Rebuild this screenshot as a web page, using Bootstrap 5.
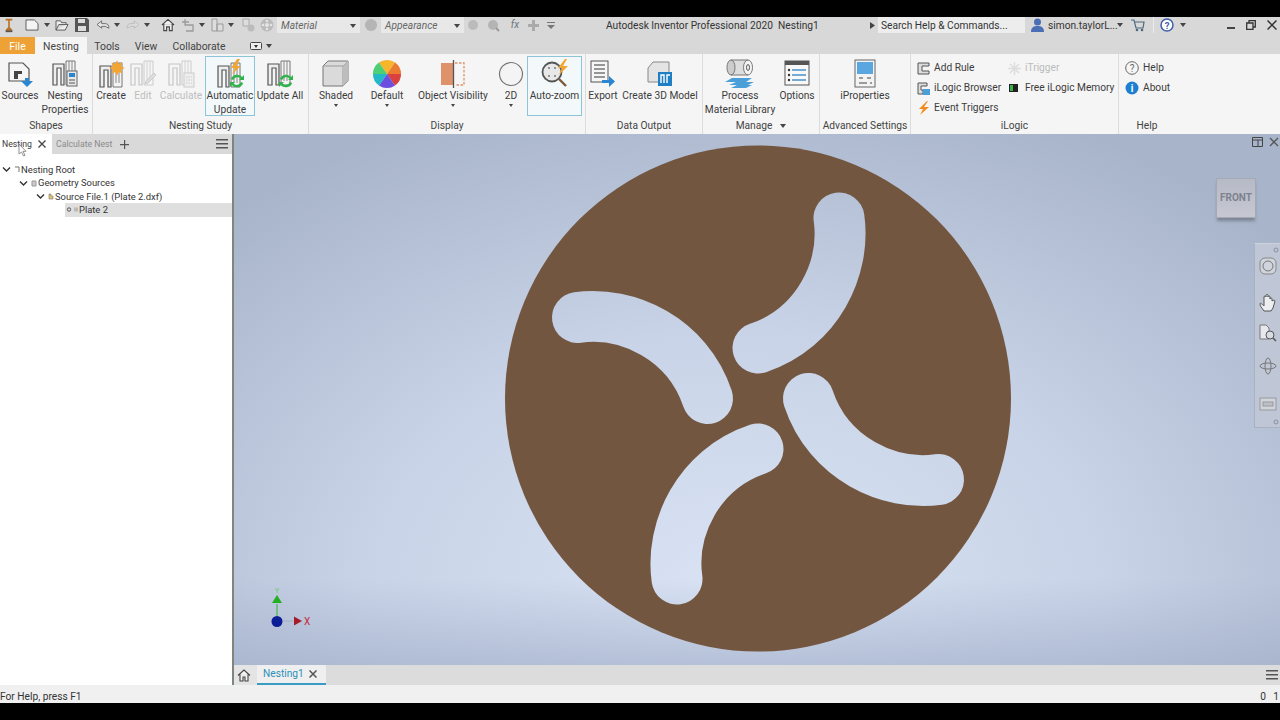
<!DOCTYPE html>
<html lang="en">
<head>
    <meta charset="UTF-8">
    <title>Autodesk Inventor Professional 2020 - Nesting1</title>
    <link href="https://cdn.jsdelivr.net/npm/bootstrap@5.3.0/dist/css/bootstrap.min.css" rel="stylesheet">
    <style>
        html, body { height: 100%; }
        body {
            background: #000;
            overflow: hidden;
            font-family: Roboto, "Liberation Sans", sans-serif;
            font-size: 10.2px;
            line-height: 14px;
            color: #3c3c3c;
            white-space: nowrap;
        }
        svg { display: block; flex: none; }
        .app-shell { margin-top: 17px; height: 686px; width: 1280px; position: relative; }

        /* title bar */
        .qa-bar { height: 20px; background: #d8d8d8; color: #333; padding-bottom: 4px; }
        .qa-ico { width: 14px; justify-content: center; align-items: center; }
        .qa-logo { width: 17px; justify-content: center; }
        .qa-combo { background: #e8e8e8; height: 16px; width: 83px; padding: 1px 0 0 4px; font-style: italic; color: #666; }
        .qa-search { background: #ededed; height: 16px; width: 147px; padding: 1px 0 0 3px; }
        .qa-caret { width: 0; height: 0; border-left: 3px solid transparent; border-right: 3px solid transparent; border-top: 4px solid #444; }
        .g1 { margin-left: 1px; } .g2 { margin-left: 2px; } .g3 { margin-left: 3px; } .g4 { margin-left: 4px; }
        .g5 { margin-left: 5px; } .g6 { margin-left: 6px; } .g7 { margin-left: 7px; } .g8 { margin-left: 8px; }
        .g48 { margin-left: 48px; }
        .qa-title { width: 172px; padding-top: 1px; }
        .qa-doc { width: 92px; padding-top: 1px; }
        .qa-user { width: 69px; margin-left: 4px; padding-top: 1px; }
        .qa-sep { height: 16px; margin-left: 8px; }
        .win-btns { gap: 11px; padding-right: 3px; }

        /* ribbon tabs */
        .tab-row { height: 17px; background: #d8d8d8; font-size: 10.4px; }
        .tab-item { color: #444; padding-top: 2px; }
        .tab-file { width: 35px; justify-content: center; background: #eea236; color: #fff; }
        .tab-on { background: #f5f5f5; width: 52px; justify-content: center; }
        .tab-tools { width: 40px; justify-content: center; }
        .tab-view { width: 38px; justify-content: center; }
        .tab-collab { width: 68px; justify-content: center; margin-right: 17px; }

        /* ribbon */
        .ribbon { height: 80px; background: #f5f5f5; }
        .rb-group { border-right: 1px solid #dcdcdc; height: 80px; padding-top: 2px; }
        .rb-label { text-align: center; line-height: 14px; color: #444; margin-top: 3px; }
        .rb-row { height: 60px; }
        .rb-btn { padding-top: 2px; text-align: center; border: 1px solid transparent; line-height: 14px; color: #3c3c3c; }
        .rb-btn svg { height: 30px; }
        .rb-on { background: #f3f8fb; border-color: #8cc4d8; }
        .rb-off { color: #bdbdbd; }
        .rb-drop { width: 0; height: 0; border-left: 2.500px solid transparent; border-right: 2.500px solid transparent; border-top: 3px solid #444; margin-top: 1px; }
        .g-shapes { width: 93px; } .g-study { width: 216px; } .g-display { width: 277px; }
        .g-data { width: 117px; } .g-manage { width: 117px; } .g-adv { width: 91px; }
        .g-logic { width: 208px; } .g-help { flex: 1; border-right: 0; }
        .help-label { width: 56px; }
        .bw-28 { width: 28px; } .bw-32 { width: 32px; } .bw-34 { width: 34px; } .bw-36 { width: 36px; }
        .bw-40 { width: 40px; } .bw-48 { width: 48px; } .bw-50 { width: 50px; } .bw-54 { width: 54px; }
        .bw-55 { width: 55px; } .bw-74 { width: 74px; } .bw-80 { width: 80px; } .bw-84 { width: 84px; } .bw-90 { width: 90px; }
        .side-col { padding: 2px 0 0 6px; width: 97px; }
        .side-col2 { padding: 2px 0 0 0; }
        .side-row { height: 20px; gap: 4px; }
        .side-off { color: #bbb; }

        /* browser panel */
        .main-row { height: 551px; }
        .browser-pane { width: 234px; background: #fff; border-right: 2px solid #7d8780; }
        .pane-tabs { height: 20px; background: #fff; font-size: 8.7px; }
        .pane-on { width: 52px; padding-left: 2px; }
        .pane-x { margin-left: auto; margin-right: 6px; }
        .pane-rest { width: 180px; background: #d9d9d9; color: #8b8b8b; padding-left: 4px; }
        .tree-box { padding-top: 9px; font-size: 9.4px; line-height: 13.4px; color: #333; }
        .tree-row { height: 13.4px; }
        .lvl-0 { padding-left: 2px; } .lvl-1 { padding-left: 19px; } .lvl-2 { padding-left: 36px; }
        .tree-sel { margin-left: 65px; background: #dfdfdf; padding-left: 1px; }
        .tree-ico { margin: 0 1px 0 3px; }

        /* viewport */
        .view-col { width: 1046px; }
        .view-area {
            height: 531px; position: relative;
            background:
                linear-gradient(180deg, rgba(160,173,200,0) 84%, rgba(160,173,200,.6) 100%),
                radial-gradient(ellipse 740px 520px at 48% 86%, #d9e3f4 0%, #c8d3e7 50%, #a8b4ca 100%);
        }
        .view-area > svg.plate-svg { position: absolute; left: 0; top: 0; }
        .pane-btns { position: absolute; right: 1px; top: 3px; gap: 6px; }
        .view-cube {
            position: absolute; left: 982px; top: 44px; width: 40px; height: 40px;
            background: linear-gradient(#b6bac6, #c6c7d1); border: 1px solid #a5a9b4;
            box-shadow: 0 4px 3px -1px #7c8494;
            color: #7d828e; font-size: 10px; font-weight: 700;
        }
        .nav-strip {
            position: absolute; right: 0; top: 109px; width: 26px; height: 185px;
            background: #bfc6d5; border-left: 1px solid #aab1c0; border-top: 1px solid #cdd2dc; border-bottom: 1px solid #aab1c0;
        }
        .nav-strip svg { position: absolute; left: 4px; }
        .nav-strip svg.n-dot { left: 18px; }
        .n-t { top: 3px; } .n-b { top: 175px; }
        .n-1 { top: 13px; } .n-2 { top: 49px; } .n-3 { top: 80px; } .n-4 { top: 113px; } .n-5 { top: 149px; }
        .doc-tabs { height: 20px; background: #dcdcdc; }
        .doc-home { width: 23px; padding-left: 3px; background: #e4e4e4; height: 20px; }
        .doc-tab { width: 69px; height: 20px; background: #efefef; border-bottom: 2px solid #3a9cc4; color: #2b8fb8; padding-left: 6px; gap: 5px; }
        .doc-menu { margin-left: auto; margin-right: 2px; }
        .status-bar { height: 18px; background: #f0f0f0; color: #333; padding-top: 5px; }
        .status-num { width: 8px; margin-left: 5px; text-align: center; }
        .mouse-arrow { position: absolute; left: 18px; top: 126px; }
    </style>
</head>
<body>
<svg width="0" height="0" class="position-absolute">
    <defs>
        <g id="nest">
            <path d="M2 25V4h11v21h-3V8H6v17z" fill="#eee" stroke="#555" stroke-width="1.2"/>
            <path d="M15 1h9v24h-9z" fill="#f4f4f4" stroke="#777"/>
            <path d="M18 1v20M21 1v20" stroke="#888"/>
        </g>
        <g id="nest-off">
            <path d="M2 25V4h11v21h-3V8H6v17z" fill="#f5f5f5" stroke="#c6c6c6" stroke-width="1.2"/>
            <path d="M15 1h9v24h-9z" fill="#f5f5f5" stroke="#ccc"/>
            <path d="M18 1v20M21 1v20" stroke="#d2d2d2"/>
        </g>
        <g id="green-sync">
            <path d="M3 6.500a5.500 5.500 0 0 1 9.500-1.500" fill="none" stroke="#2fb34a" stroke-width="2.400"/>
            <path d="M13 9.500a5.500 5.500 0 0 1-9.500 1.500" fill="none" stroke="#2fb34a" stroke-width="2.400"/>
            <path d="M15 2v5h-5zM1 14V9h5z" fill="#2fb34a"/>
        </g>
        <path id="chev" d="M1 1.5l3.5 3.5 3.5-3.5" fill="none" stroke="#333" stroke-width="1.4"/>
    </defs>
</svg>

<div class="app-shell d-flex flex-column">
    <!-- title bar -->
    <div class="qa-bar d-flex align-items-center">
        <div class="qa-logo d-flex">
            <svg width="10" height="15" viewBox="0 0 10 18"><path d="M1 1h8v2H6v8l3 3v2H1v-2l3-3V3H1z" fill="#b8722a"/><path d="M1 15h8v2H1z" fill="#555"/></svg>
        </div>
        <div class="qa-ico d-flex g8"><svg width="14" height="12" viewBox="0 0 15 13"><path d="M1 1h9l4 4v7H1z" fill="#f4f4f4" stroke="#555"/></svg></div>
        <div class="qa-ico d-flex g1"><div class="qa-caret"></div></div>
        <div class="qa-ico d-flex g1"><svg width="14" height="12" viewBox="0 0 15 13"><path d="M1 12V2h5l1 2h5v2H4l-3 6h10l3-6H12" fill="#eee" stroke="#555"/></svg></div>
        <div class="qa-ico d-flex g6"><svg width="14" height="14" viewBox="0 0 14 14"><path d="M0 0h12l2 2v12H0z" fill="#555"/><path d="M3 1h7v4H3zM3 8h8v5H3z" fill="#ddd"/></svg></div>
        <div class="qa-ico d-flex g7"><svg width="14" height="10" viewBox="0 0 15 11"><path d="M6 1L1 5l5 4V7h4l4 2c0-3-1-5-4-5H6z" fill="#e8e8e8" stroke="#666"/></svg></div>
        <div class="qa-ico d-flex"><div class="qa-caret"></div></div>
        <div class="qa-ico d-flex g2"><svg width="14" height="10" viewBox="0 0 15 11"><path d="M9 1l5 4-5 4V7H5L1 9c0-3 1-5 4-5h4z" fill="#ddd" stroke="#bbb"/></svg></div>
        <div class="qa-ico d-flex"><div class="qa-caret"></div></div>
        <div class="qa-ico d-flex g7"><svg width="14" height="14" viewBox="0 0 15 14"><path d="M1 7l6.500-6 6.500 6M3 6v7h3V9h3v4h3V6" fill="#eee" stroke="#444" stroke-width="1.200"/></svg></div>
        <div class="qa-ico d-flex g6"><svg width="14" height="14" viewBox="0 0 14 14"><path d="M4 1v6h8v6H5M1 4h7" fill="none" stroke="#9a9a9a" stroke-width="1.300"/></svg></div>
        <div class="qa-ico d-flex"><div class="qa-caret"></div></div>
        <div class="qa-ico d-flex g1"><svg width="13" height="14" viewBox="0 0 13 14"><path d="M1 1h5v12H1zM6 6h6v7H6z" fill="#ddd" stroke="#9a9a9a"/></svg></div>
        <div class="qa-ico d-flex"><div class="qa-caret"></div></div>
        <div class="qa-ico d-flex g3"><svg width="13" height="14" viewBox="0 0 13 14"><path d="M1 1h6v7H1z" fill="#ddd" stroke="#aaa"/><circle cx="9" cy="10" r="3.500" fill="#bbb"/></svg></div>
        <div class="qa-ico d-flex g5"><svg width="14" height="14" viewBox="0 0 14 14"><circle cx="7" cy="7" r="6.500" fill="#bbb"/><circle cx="7" cy="7" r="2" fill="#e4e4e4"/><circle cx="7" cy="3" r="1.300" fill="#e4e4e4"/><circle cx="7" cy="11" r="1.300" fill="#e4e4e4"/><circle cx="3" cy="7" r="1.300" fill="#e4e4e4"/><circle cx="11" cy="7" r="1.300" fill="#e4e4e4"/></svg></div>
        <div class="qa-combo d-flex align-items-center justify-content-between g3">Material<div class="qa-caret me-1"></div></div>
        <div class="qa-ico d-flex g4"><svg width="14" height="14" viewBox="0 0 15 15"><circle cx="7.500" cy="7.500" r="6.500" fill="#b5b5b5"/></svg></div>
        <div class="qa-combo d-flex align-items-center justify-content-between g3">Appearance<div class="qa-caret me-1"></div></div>
        <div class="qa-ico d-flex g2"><svg width="13" height="13" viewBox="0 0 13 13"><circle cx="6" cy="6" r="5" fill="#bbb"/></svg></div>
        <div class="qa-ico d-flex g6"><svg width="13" height="13" viewBox="0 0 13 13"><circle cx="6" cy="6" r="5" fill="#b4b4b4"/><path d="M9 9l3 3" stroke="#999" stroke-width="2"/></svg></div>
        <div class="qa-ico d-flex g8"><span class="fst-italic text-secondary">fx</span></div>
        <div class="qa-ico d-flex g4"><svg width="11" height="11" viewBox="0 0 11 11"><path d="M4 0h3v4h4v3H7v4H4V7H0V4h4z" fill="#aaa"/></svg></div>
        <div class="qa-ico d-flex g4"><svg width="8" height="7" viewBox="0 0 8 7"><path d="M0 0h8v1H0zM0 3h8L4 7z" fill="#777"/></svg></div>
        <div class="qa-title g48">Autodesk Inventor Professional 2020</div>
        <div class="qa-doc">Nesting1</div>
        <svg width="5" height="7" viewBox="0 0 5 7"><path d="M0 0l5 3.500L0 7z" fill="#444"/></svg>
        <div class="qa-search d-flex align-items-center g3">Search Help &amp; Commands...</div>
        <svg class="g6" width="13" height="14" viewBox="0 0 13 14"><circle cx="6.500" cy="4" r="3.500" fill="#4a6fb5"/><path d="M0 14c0-5 3-6 6.500-6S13 9 13 14z" fill="#4a6fb5"/></svg>
        <div class="qa-user">simon.taylorL...</div>
        <div class="qa-caret"></div>
        <svg class="g8" width="14" height="13" viewBox="0 0 14 13"><path d="M0 1h3l2 8h7l1-6H4" fill="none" stroke="#4b6b80" stroke-width="1.200"/><circle cx="6" cy="11" r="1.300" fill="#4b6b80"/><circle cx="11" cy="11" r="1.300" fill="#4b6b80"/></svg>
        <div class="border-start border-secondary-subtle qa-sep"></div>
        <svg class="g6" width="14" height="14" viewBox="0 0 14 14"><circle cx="7" cy="7" r="6" fill="#fff" stroke="#3f5fa8" stroke-width="1.500"/><text x="7" y="10.500" text-anchor="middle" font-size="9.500" font-weight="700" fill="#3f5fa8">?</text></svg>
        <div class="qa-caret g6"></div>
        <div class="ms-auto d-flex align-items-center win-btns">
            <svg width="8" height="8" viewBox="0 0 8 8"><path d="M0 6h8v2H0z" fill="#444"/></svg>
            <svg width="10" height="10" viewBox="0 0 10 10"><path d="M3 3V.700h6.300V7H7M.700 3h6.300v6.300H.700z" fill="none" stroke="#333" stroke-width="1.300"/></svg>
            <svg width="10" height="10" viewBox="0 0 10 10"><path d="M.500.500l9 9M9.500.500l-9 9" stroke="#333" stroke-width="1.500"/></svg>
        </div>
    </div>

    <!-- ribbon tabs -->
    <div class="tab-row d-flex align-items-stretch">
        <div class="tab-item tab-file d-flex align-items-center">File</div>
        <div class="tab-item tab-on d-flex align-items-center">Nesting</div>
        <div class="tab-item tab-tools d-flex align-items-center">Tools</div>
        <div class="tab-item tab-view d-flex align-items-center">View</div>
        <div class="tab-item tab-collab d-flex align-items-center">Collaborate</div>
        <div class="d-flex align-items-center gap-1">
            <svg width="12" height="8" viewBox="0 0 12 8"><rect x=".500" y=".500" width="11" height="7" rx="1" fill="#eee" stroke="#444"/><path d="M4 3h4L6 6z" fill="#333"/></svg>
            <div class="qa-caret"></div>
        </div>
    </div>

    <!-- ribbon -->
    <div class="ribbon d-flex">
        <div class="rb-group g-shapes">
            <div class="rb-row d-flex">
                <div class="rb-btn bw-40 d-flex flex-column align-items-center">
                    <svg width="30" height="30" viewBox="0 0 30 30"><path d="M4 4h14l6 6v12H4z" fill="#f6f6f6" stroke="#555" stroke-width="1.200"/><path d="M9 20v-8h8v3h-4v5z" fill="#444"/><path d="M20 19h4v3h4l-6 6-6-6h4z" fill="#2a86d0"/></svg>
                    Sources
                </div>
                <div class="rb-btn bw-50 d-flex flex-column align-items-center">
                    <svg width="30" height="30" viewBox="0 0 30 30"><use href="#nest" x="1" y="1"/><rect x="17" y="12" width="10" height="15" fill="#e8e8e8" stroke="#666"/><rect x="19" y="14" width="6" height="4" fill="#2a86d0"/><path d="M19 21h6M19 24h6" stroke="#555"/></svg>
                    Nesting<br>Properties
                </div>
            </div>
            <div class="rb-label">Shapes</div>
        </div>
        <div class="rb-group g-study">
            <div class="rb-row d-flex">
                <div class="rb-btn bw-36 d-flex flex-column align-items-center">
                    <svg width="30" height="30" viewBox="0 0 30 30"><use href="#nest" x="2" y="3"/><path d="M21 1l1.600 4 4-1.500L25 7.500l4 1.500-4 1.500 1.600 4-4-1.500-1.600 4-1.600-4-4 1.500 1.600-4-4-1.500 4-1.500-1.600-4 4 1.500z" fill="#f2a531"/></svg>
                    Create
                </div>
                <div class="rb-btn rb-off bw-28 d-flex flex-column align-items-center">
                    <svg width="28" height="30" viewBox="0 0 28 30"><use href="#nest-off" x="0" y="1"/><path d="M25 14l2 2-8 8-3 1 1-3z" fill="#ddd" stroke="#ccc"/></svg>
                    Edit
                </div>
                <div class="rb-btn rb-off bw-48 d-flex flex-column align-items-center">
                    <svg width="30" height="30" viewBox="0 0 30 30"><use href="#nest-off" x="1" y="1"/><rect x="18" y="14" width="10" height="14" fill="#eee" stroke="#ccc"/><path d="M20 18h6M20 21h6M20 24h6" stroke="#ccc" stroke-dasharray="1.500 1"/></svg>
                    Calculate
                </div>
                <div class="rb-btn rb-on bw-50 d-flex flex-column align-items-center">
                    <svg width="30" height="30" viewBox="0 0 30 30"><use href="#nest" x="1" y="3"/><path d="M22 0l-6 9h4l-3 6 9-8h-5l4-7z" fill="#f2a531"/><use href="#green-sync" x="14" y="14"/></svg>
                    Automatic<br>Update
                </div>
                <div class="rb-btn bw-50 d-flex flex-column align-items-center">
                    <svg width="30" height="30" viewBox="0 0 30 30"><use href="#nest" x="1" y="1"/><use href="#green-sync" x="13" y="14"/></svg>
                    Update All
                </div>
            </div>
            <div class="rb-label">Nesting Study</div>
        </div>
        <div class="rb-group g-display">
            <div class="rb-row d-flex">
                <div class="rb-btn bw-54 d-flex flex-column align-items-center">
                    <svg width="30" height="30" viewBox="0 0 30 30"><path d="M2 7l5-5h20v20l-5 5H2z" fill="#dadada" stroke="#777"/><path d="M2 7h20v20M22 7l5-5" fill="none" stroke="#999"/><path d="M22 7l5-5v20l-5 5z" fill="#bdbdbd"/></svg>
                    Shaded
                    <div class="rb-drop"></div>
                </div>
                <div class="rb-btn bw-48 d-flex flex-column align-items-center">
                    <svg width="30" height="30" viewBox="0 0 30 30"><circle cx="15" cy="15" r="14" fill="#ddd"/><path d="M15 15L7 3.500A14 14 0 0 1 23 3.500z" fill="#f6b52b"/><path d="M15 15L23 3.500A14 14 0 0 1 29 15z" fill="#ec7b32"/><path d="M15 15h14a14 14 0 0 1-6 11.500z" fill="#d9403e"/><path d="M15 15l8 11.500a14 14 0 0 1-16 0z" fill="#6d4fe0"/><path d="M15 15L7 26.500A14 14 0 0 1 1 15z" fill="#22b8c7"/><path d="M15 15H1A14 14 0 0 1 7 3.500z" fill="#4fcf75"/></svg>
                    Default
                    <div class="rb-drop"></div>
                </div>
                <div class="rb-btn bw-84 d-flex flex-column align-items-center">
                    <svg width="30" height="30" viewBox="0 0 30 30"><rect x="3" y="4" width="12" height="22" fill="#df9169"/><path d="M15.500 1v28" stroke="#555" stroke-width="1.300"/><path d="M17 4h9v22h-9" fill="none" stroke="#df9169" stroke-dasharray="2.500 1.500" stroke-width="1.300"/></svg>
                    Object Visibility
                    <div class="rb-drop"></div>
                </div>
                <div class="rb-btn bw-32 d-flex flex-column align-items-center">
                    <svg width="26" height="30" viewBox="0 0 26 30"><circle cx="13" cy="15" r="11.500" fill="#f4f4f4" stroke="#777" stroke-width="1.200"/></svg>
                    2D
                    <div class="rb-drop"></div>
                </div>
                <div class="rb-btn rb-on bw-55 d-flex flex-column align-items-center">
                    <svg width="30" height="30" viewBox="0 0 30 30"><circle cx="12" cy="13" r="9.500" fill="#e8e8e8" stroke="#555" stroke-width="1.800"/><path d="M19 20l7 7" stroke="#7c5a3a" stroke-width="2.400"/><path d="M8 9h2M14 9h2M8 17h2M14 17h2" stroke="#777" stroke-width="1.500"/><path d="M25 0l-7 9h4l-3 7 9-9h-5l4-7z" fill="#f2a531"/></svg>
                    Auto-zoom
                </div>
            </div>
            <div class="rb-label">Display</div>
        </div>
        <div class="rb-group g-data">
            <div class="rb-row d-flex">
                <div class="rb-btn bw-34 d-flex flex-column align-items-center">
                    <svg width="30" height="30" viewBox="0 0 30 30"><rect x="3" y="2" width="17" height="21" fill="#f6f6f6" stroke="#555"/><path d="M6 6h11M6 10h11M6 14h11M6 18h11" stroke="#777" stroke-width="1.300"/><path d="M14 21h7v-4l6 5.500-6 5.500v-4h-7z" fill="#2a86d0"/></svg>
                    Export
                </div>
                <div class="rb-btn bw-80 d-flex flex-column align-items-center">
                    <svg width="30" height="30" viewBox="0 0 30 30"><path d="M3 9l5-6h16v20H3z" fill="#e4e4e4" stroke="#888"/><rect x="13" y="13" width="14" height="14" fill="#1f7fc4"/><path d="M16 24v-8h3v8M22 24v-8h3" fill="none" stroke="#fff" stroke-width="1.400"/></svg>
                    Create 3D Model
                </div>
            </div>
            <div class="rb-label">Data Output</div>
        </div>
        <div class="rb-group g-manage">
            <div class="rb-row d-flex">
                <div class="rb-btn bw-74 d-flex flex-column align-items-center">
                    <svg width="30" height="30" viewBox="0 0 30 30"><path d="M6 1h17v15H6z" fill="#ddd"/><ellipse cx="6" cy="8.500" rx="4" ry="7.500" fill="#ccc" stroke="#777"/><ellipse cx="23" cy="8.500" rx="4.500" ry="7.500" fill="#f3f3f3" stroke="#777"/><ellipse cx="23" cy="8.500" rx="1.500" ry="3" fill="none" stroke="#555"/><path d="M6 1h17M6 16h17" stroke="#777"/><path d="M0 23l7-4h20l-6 4zM4 26l7-3h18l-6 3zM6 29l6-3h15l-6 3z" fill="#4b9fd8"/></svg>
                    Process<br>Material Library
                </div>
                <div class="rb-btn bw-40 d-flex flex-column align-items-center">
                    <svg width="28" height="30" viewBox="0 0 28 30"><rect x="2" y="2" width="24" height="24" fill="#f8f8f8" stroke="#555"/><path d="M2 2h24v4H2z" fill="#555"/><path d="M9 11h14M9 16h14M9 21h14" stroke="#4a90c8" stroke-width="1.300"/><circle cx="6" cy="11" r="1.200" fill="#333"/><circle cx="6" cy="16" r="1.200" fill="#333"/><circle cx="6" cy="21" r="1.200" fill="#333"/></svg>
                    Options
                </div>
            </div>
            <div class="rb-label d-flex align-items-center justify-content-center gap-2">Manage <span class="qa-caret"></span></div>
        </div>
        <div class="rb-group g-adv">
            <div class="rb-row d-flex">
                <div class="rb-btn bw-90 d-flex flex-column align-items-center">
                    <svg width="24" height="30" viewBox="0 0 24 30"><rect x="2" y="1" width="20" height="27" fill="#f3f3f3" stroke="#666"/><rect x="4" y="3" width="16" height="12" fill="#5aa6e0"/><path d="M6 19h4M14 19h4M6 24h8M17 24h2" stroke="#444" stroke-width="1.200"/></svg>
                    iProperties
                </div>
            </div>
            <div class="rb-label">Advanced Settings</div>
        </div>
        <div class="rb-group g-logic">
            <div class="rb-row d-flex">
                <div class="side-col">
                    <div class="side-row d-flex align-items-center">
                        <svg width="13" height="13" viewBox="0 0 13 13"><path d="M1 1h11v3H5v5h7v3H1z" fill="#ddd" stroke="#555"/></svg>
                        Add Rule
                    </div>
                    <div class="side-row d-flex align-items-center">
                        <svg width="13" height="13" viewBox="0 0 13 13"><path d="M1 1h9v3H4v4h2v4H1z" fill="#ddd" stroke="#555"/><rect x="6" y="7" width="7" height="6" fill="#4b9fd8"/></svg>
                        iLogic Browser
                    </div>
                    <div class="side-row d-flex align-items-center">
                        <svg width="13" height="14" viewBox="0 0 13 14"><path d="M10 0L2 8h4l-3 6 9-8H7l4-6z" fill="#ef8e1f"/></svg>
                        Event Triggers
                    </div>
                </div>
                <div class="side-col2">
                    <div class="side-row d-flex align-items-center side-off">
                        <svg width="13" height="13" viewBox="0 0 13 13"><path d="M6.500 0v13M0 6.500h13M2 2l9 9M11 2l-9 9" stroke="#ddd" stroke-width="1.500"/></svg>
                        iTrigger
                    </div>
                    <div class="side-row d-flex align-items-center">
                        <svg width="13" height="10" viewBox="0 0 13 10"><rect x="1" y="1" width="9" height="8" fill="#222"/><rect x="2" y="2" width="3" height="6" fill="#36b24a"/></svg>
                        Free iLogic Memory
                    </div>
                </div>
            </div>
            <div class="rb-label">iLogic</div>
        </div>
        <div class="rb-group g-help">
            <div class="rb-row d-flex">
                <div class="side-col">
                    <div class="side-row d-flex align-items-center">
                        <svg width="14" height="14" viewBox="0 0 14 14"><circle cx="7" cy="7" r="6.300" fill="#f6f6f6" stroke="#666"/><text x="7" y="10.500" text-anchor="middle" font-size="10" fill="#666">?</text></svg>
                        Help
                    </div>
                    <div class="side-row d-flex align-items-center">
                        <svg width="14" height="14" viewBox="0 0 14 14"><circle cx="7" cy="7" r="6.500" fill="#1e7fd0"/><text x="7" y="11" text-anchor="middle" font-size="10" font-weight="700" fill="#fff">i</text></svg>
                        About
                    </div>
                </div>
            </div>
            <div class="rb-label help-label">Help</div>
        </div>
    </div>

    <!-- main area -->
    <div class="main-row d-flex">
        <div class="browser-pane">
            <div class="pane-tabs d-flex">
                <div class="pane-on d-flex align-items-center">Nesting
                    <svg class="pane-x" width="8" height="8" viewBox="0 0 8 8"><path d="M.500.500l7 7M7.500.500l-7 7" stroke="#444" stroke-width="1.300"/></svg>
                </div>
                <div class="pane-rest d-flex align-items-center gap-2">Calculate Nest
                    <svg width="9" height="9" viewBox="0 0 9 9"><path d="M4 0h1.200v4H9v1.200H5.200V9H4V5.200H0V4h4z" fill="#555"/></svg>
                    <svg class="ms-auto me-1" width="12" height="10" viewBox="0 0 12 10"><path d="M0 0h12v1.600H0zM0 4h12v1.600H0zM0 8h12v1.600H0z" fill="#555"/></svg>
                </div>
            </div>
            <div class="tree-box">
                <div class="tree-row lvl-0 d-flex align-items-center">
                    <svg width="9" height="7" viewBox="0 0 9 7"><use href="#chev"/></svg>
                    <svg class="tree-ico" width="6" height="7" viewBox="0 0 6 7"><path d="M1 1h4v5" fill="none" stroke="#777"/></svg>
                    Nesting Root
                </div>
                <div class="tree-row lvl-1 d-flex align-items-center">
                    <svg width="9" height="7" viewBox="0 0 9 7"><use href="#chev"/></svg>
                    <svg class="tree-ico" width="6" height="7" viewBox="0 0 6 7"><path d="M1 1h4v5H1z" fill="#ccc" stroke="#999"/></svg>
                    Geometry Sources
                </div>
                <div class="tree-row lvl-2 d-flex align-items-center">
                    <svg width="9" height="7" viewBox="0 0 9 7"><use href="#chev"/></svg>
                    <svg class="tree-ico" width="6" height="7" viewBox="0 0 6 7"><path d="M1 1h2v2h2v3H1z" fill="#e3c36a" stroke="#777" stroke-width=".6"/></svg>
                    Source File.1 (Plate 2.dxf)
                </div>
                <div class="tree-row tree-sel d-flex align-items-center">
                    <svg width="13" height="7" viewBox="0 0 13 7"><circle cx="3" cy="3.500" r="1.700" fill="none" stroke="#555"/><rect x="8" y="1.500" width="4" height="4" fill="#bbb"/></svg>
                    Plate 2
                </div>
            </div>
        </div>

        <div class="view-col">
            <div class="view-area">
                <svg class="plate-svg" width="1046" height="531" viewBox="234 134 1046 531">
                    <defs>
                        <path id="slot" d="M839 218C846 268 818 328 758 348" fill="none" stroke-width="51" stroke-linecap="round"/>
                        <mask id="plate-mask" maskUnits="userSpaceOnUse" x="234" y="134" width="1046" height="531">
                            <rect x="234" y="134" width="1046" height="531" fill="#fff"/>
                            <g stroke="#000">
                                <use href="#slot"/>
                                <use href="#slot" transform="rotate(90 758 398.500)"/>
                                <use href="#slot" transform="rotate(180 758 398.500)"/>
                                <use href="#slot" transform="rotate(270 758 398.500)"/>
                            </g>
                        </mask>
                    </defs>
                    <circle cx="758" cy="398.500" r="253" fill="#735640" mask="url(#plate-mask)"/>
                    <path d="M277 616V604" stroke="#35b035" stroke-width="1"/>
                    <path d="M277 595l5 8h-10z" fill="#22b022"/>
                    <text x="277" y="593" text-anchor="middle" font-size="7" fill="#5fd05f">Y</text>
                    <path d="M283 621h10" stroke="#a8aebb"/>
                    <circle cx="277" cy="621.500" r="5.500" fill="#0a1c96"/>
                    <path d="M294 616.500l8 4.500-8 4.500z" fill="#a81a2a"/>
                    <text x="304" y="625" font-size="10" fill="#c8283c">X</text>
                </svg>
                <div class="pane-btns d-flex">
                    <svg width="11" height="10" viewBox="0 0 11 10"><path d="M.500.500h10v9H.500zM.500 3h10M6 3v6.500" fill="none" stroke="#444"/></svg>
                    <svg width="10" height="10" viewBox="0 0 10 10"><path d="M1 1l8 8M9 1l-8 8" stroke="#555" stroke-width="1.300"/></svg>
                </div>
                <div class="view-cube d-flex align-items-center justify-content-center">FRONT</div>
                <div class="nav-strip">
                    <svg class="n-dot n-t" width="6" height="6" viewBox="0 0 6 6"><circle cx="3" cy="3" r="2" fill="none" stroke="#8a90a0"/></svg>
                    <svg class="n-1" width="18" height="18" viewBox="0 0 18 18"><rect x="1" y="1" width="16" height="16" rx="5" fill="#d0d4dd" stroke="#888"/><circle cx="9" cy="9" r="5" fill="#d0d4dd" stroke="#777"/></svg>
                    <svg class="n-2" width="18" height="20" viewBox="0 0 18 20"><path d="M5 18C3 15 1 13 1 11s3 1 4 2V4c0-1.500 2-1.500 2 0V2.500c0-1.500 2-1.500 2 0V4c0-1.500 2-1.500 2 0v2c0-1.500 2-1.500 2 0v2c1-1 3-1 3 0l-2 7-2 3z" fill="#eceef2" stroke="#555"/></svg>
                    <svg class="n-3" width="18" height="18" viewBox="0 0 18 18"><path d="M1 1h6l3 3v11H1z" fill="#e6e8ed" stroke="#777"/><circle cx="11" cy="11" r="4" fill="#d8dbe2" stroke="#555"/><path d="M14 14l3 3" stroke="#555" stroke-width="1.500"/></svg>
                    <svg class="n-4" width="18" height="18" viewBox="0 0 18 18"><ellipse cx="9" cy="9" rx="8" ry="3" fill="none" stroke="#777"/><ellipse cx="9" cy="9" rx="3" ry="8" fill="none" stroke="#777"/></svg>
                    <svg class="n-5" width="18" height="18" viewBox="0 0 18 18"><rect x="1" y="5" width="16" height="12" fill="#d0d4dd" stroke="#999"/><rect x="4" y="9" width="10" height="4" fill="#bcc0ca" stroke="#999"/></svg>
                    <svg class="n-dot n-b" width="6" height="6" viewBox="0 0 6 6"><circle cx="3" cy="3" r="2" fill="none" stroke="#8a90a0"/></svg>
                </div>
            </div>
            <div class="doc-tabs d-flex align-items-center">
                <div class="doc-home d-flex align-items-center">
                    <svg width="14" height="13" viewBox="0 0 14 13"><path d="M1 6.500L7 1l6 5.500M3 5.500V12h3V8h2v4h3V5.500" fill="#f4f4f4" stroke="#444" stroke-width="1.100"/></svg>
                </div>
                <div class="doc-tab d-flex align-items-center">Nesting1
                    <svg width="8" height="8" viewBox="0 0 8 8"><path d="M.500.500l7 7M7.500.500l-7 7" stroke="#555" stroke-width="1.500"/></svg>
                </div>
                <svg class="doc-menu" width="12" height="10" viewBox="0 0 12 10"><path d="M0 0h12v1.600H0zM0 4h12v1.600H0zM0 8h12v1.600H0z" fill="#555"/></svg>
            </div>
        </div>
    </div>

    <!-- status -->
    <div class="status-bar d-flex align-items-center">
        For Help, press F1
        <span class="status-num ms-auto">0</span>
        <span class="status-num">1</span>
    </div>

    <svg class="mouse-arrow" width="10" height="14" viewBox="0 0 10 14"><path d="M1 1v10l2.500-2 2 4 1.500-.7-2-4H8z" fill="#fff" stroke="#777" stroke-width=".8"/></svg>
</div>
<script src="https://cdn.jsdelivr.net/npm/bootstrap@5.3.0/dist/js/bootstrap.bundle.min.js"></script>
</body>
</html>
